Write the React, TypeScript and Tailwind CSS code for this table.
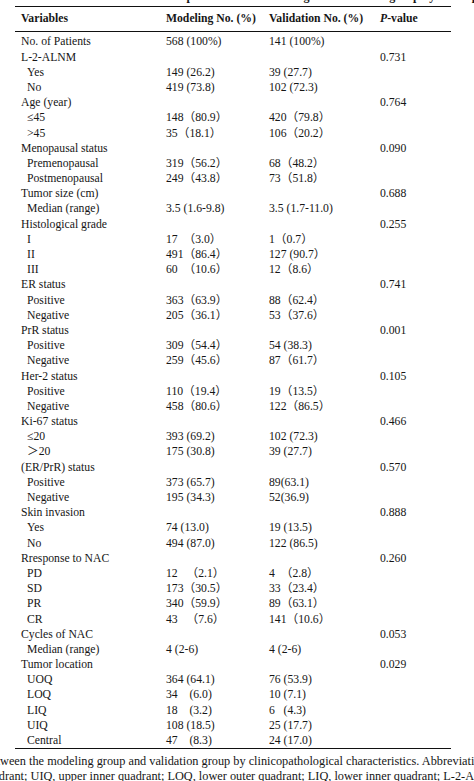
type Row = {
  label: string;
  sub?: boolean;
  mod?: string;
  val?: string;
  p?: string;
};

const rows: Row[] = [
  { label: "No. of Patients", mod: "568 (100%)", val: "141 (100%)" },
  { label: "L-2-ALNM", p: "0.731" },
  { label: "Yes", sub: true, mod: "149 (26.2)", val: "39 (27.7)" },
  { label: "No", sub: true, mod: "419 (73.8)", val: "102 (72.3)" },
  { label: "Age (year)", p: "0.764" },
  { label: "≤45", sub: true, mod: "148（80.9）", val: "420（79.8）" },
  { label: ">45", sub: true, mod: "35（18.1）", val: "106（20.2）" },
  { label: "Menopausal status", p: "0.090" },
  { label: "Premenopausal", sub: true, mod: "319（56.2）", val: "68（48.2）" },
  { label: "Postmenopausal", sub: true, mod: "249（43.8）", val: "73（51.8）" },
  { label: "Tumor size (cm)", p: "0.688" },
  { label: "Median (range)", sub: true, mod: "3.5 (1.6-9.8)", val: "3.5 (1.7-11.0)" },
  { label: "Histological grade", p: "0.255" },
  { label: "I", sub: true, mod: "17  （3.0）", val: "1（0.7）" },
  { label: "II", sub: true, mod: "491（86.4）", val: "127 (90.7）" },
  { label: "III", sub: true, mod: "60  （10.6）", val: "12（8.6）" },
  { label: "ER status", p: "0.741" },
  { label: "Positive", sub: true, mod: "363（63.9）", val: "88（62.4）" },
  { label: "Negative", sub: true, mod: "205（36.1）", val: "53（37.6）" },
  { label: "PrR status", p: "0.001" },
  { label: "Positive", sub: true, mod: "309（54.4）", val: "54 (38.3)" },
  { label: "Negative", sub: true, mod: "259（45.6）", val: "87（61.7）" },
  { label: "Her-2 status", p: "0.105" },
  { label: "Positive", sub: true, mod: "110（19.4）", val: "19（13.5）" },
  { label: "Negative", sub: true, mod: "458（80.6）", val: "122（86.5）" },
  { label: "Ki-67 status", p: "0.466" },
  { label: "≤20", sub: true, mod: "393 (69.2)", val: "102 (72.3)" },
  { label: "＞20", sub: true, mod: "175 (30.8)", val: "39 (27.7)" },
  { label: "(ER/PrR) status", p: "0.570" },
  { label: "Positive", sub: true, mod: "373 (65.7)", val: "89(63.1)" },
  { label: "Negative", sub: true, mod: "195 (34.3)", val: "52(36.9)" },
  { label: "Skin invasion", p: "0.888" },
  { label: "Yes", sub: true, mod: "74 (13.0)", val: "19 (13.5)" },
  { label: "No", sub: true, mod: "494 (87.0)", val: "122 (86.5)" },
  { label: "Rresponse to NAC", p: "0.260" },
  { label: "PD", sub: true, mod: "12   （2.1）", val: "4  （2.8）" },
  { label: "SD", sub: true, mod: "173（30.5）", val: "33（23.4）" },
  { label: "PR", sub: true, mod: "340（59.9）", val: "89（63.1）" },
  { label: "CR", sub: true, mod: "43   （7.6）", val: "141（10.6）" },
  { label: "Cycles of NAC", p: "0.053" },
  { label: "Median (range)", sub: true, mod: "4 (2-6)", val: "4 (2-6)" },
  { label: "Tumor location", p: "0.029" },
  { label: "UOQ", sub: true, mod: "364 (64.1)", val: "76 (53.9)" },
  { label: "LOQ", sub: true, mod: "34    (6.0)", val: "10 (7.1)" },
  { label: "LIQ", sub: true, mod: "18    (3.2)", val: "6   (4.3)" },
  { label: "UIQ", sub: true, mod: "108 (18.5)", val: "25 (17.7)" },
  { label: "Central", sub: true, mod: "47    (8.3)", val: "24 (17.0)" },
];

export default function App() {
  return (
    <div className="w-[474px] h-[781px] overflow-hidden bg-white text-[#161616] font-['Liberation_Serif','Noto_Sans_CJK_SC',serif]">
      {/* title line, cut off by the top edge */}
      <div className="h-[6px] overflow-hidden flex flex-col justify-end">
        <div className="whitespace-nowrap font-bold text-[12px] leading-[14px] -ml-[6px] mb-[3px]">
          Table 1. Clinical characteristics of all patients in the modeling and validation group by clinicopathological features
        </div>
      </div>

      <div className="ml-[15px] w-[436px]">
        <div className="border-t-[1.5px] border-[#111]" />
        <div className="grid grid-cols-[145px_103px_111px_1fr] pl-[6px] h-[24px] items-center font-bold text-[11.7px]">
          <div>Variables</div>
          <div>Modeling No. (%)</div>
          <div>Validation No. (%)</div>
          <div>
            <span className="italic">P</span>-value
          </div>
        </div>
        <div className="border-t-[1.5px] border-[#111]" />

        <div className="pt-[2.4px] text-[11.7px]">
          {rows.map((r, i) => (
            <div
              key={i}
              className="grid grid-cols-[145px_103px_111px_1fr] pl-[6px] h-[15.2px] leading-[15.2px] whitespace-pre"
            >
              <div className={r.sub ? "pl-[6px]" : ""}>{r.label}</div>
              <div>{r.mod ?? ""}</div>
              <div>{r.val ?? ""}</div>
              <div>{r.p ?? ""}</div>
            </div>
          ))}
        </div>
        <div className="border-t-[1.5px] border-[#111]" />
      </div>

      <div className="pt-[5px] text-[12.3px] leading-[14.5px] whitespace-nowrap">
        <div className="-ml-[15px]">
          between the modeling group and validation group by clinicopathological characteristics. Abbreviations: UOQ, upper outer
        </div>
        <div className="-ml-[19px]">
          quadrant; UIQ, upper inner quadrant; LOQ, lower outer quadrant; LIQ, lower inner quadrant; L-2-ALNM, level 2 axillary
        </div>
      </div>
    </div>
  );
}
